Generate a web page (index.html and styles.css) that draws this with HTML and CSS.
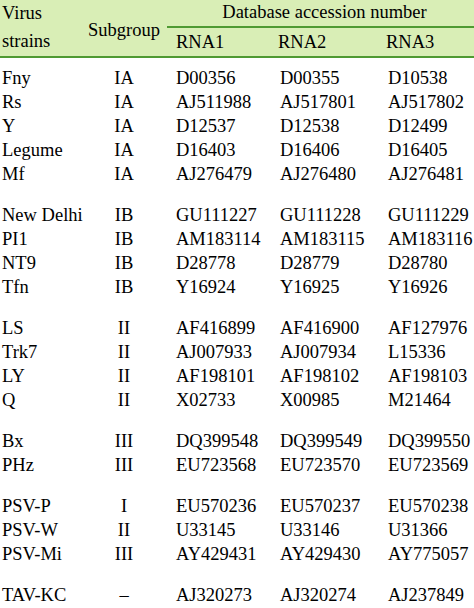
FILE: index.html
```html
<!DOCTYPE html>
<html>
<head>
<meta charset="utf-8">
<link rel="stylesheet" href="styles.css">
</head>
<body>
<div class="table">
  <div class="head">
    <div class="h-strain"><span>Virus</span><span>strains</span></div>
    <div class="h-sub">Subgroup</div>
    <div class="h-db">
      <div class="h-db-title">Database accession number</div>
      <div class="h-rna"><span>RNA1</span><span>RNA2</span><span>RNA3</span></div>
    </div>
  </div>
  <div class="body">
    <div class="group">
      <div class="row"><span>Fny</span><span class="sub">IA</span><span>D00356</span><span>D00355</span><span>D10538</span></div>
      <div class="row"><span>Rs</span><span class="sub">IA</span><span>AJ511988</span><span>AJ517801</span><span>AJ517802</span></div>
      <div class="row"><span>Y</span><span class="sub">IA</span><span>D12537</span><span>D12538</span><span>D12499</span></div>
      <div class="row"><span>Legume</span><span class="sub">IA</span><span>D16403</span><span>D16406</span><span>D16405</span></div>
      <div class="row"><span>Mf</span><span class="sub">IA</span><span>AJ276479</span><span>AJ276480</span><span>AJ276481</span></div>
    </div>
    <div class="group">
      <div class="row"><span>New Delhi</span><span class="sub">IB</span><span>GU111227</span><span>GU111228</span><span>GU111229</span></div>
      <div class="row"><span>PI1</span><span class="sub">IB</span><span>AM183114</span><span>AM183115</span><span>AM183116</span></div>
      <div class="row"><span>NT9</span><span class="sub">IB</span><span>D28778</span><span>D28779</span><span>D28780</span></div>
      <div class="row"><span>Tfn</span><span class="sub">IB</span><span>Y16924</span><span>Y16925</span><span>Y16926</span></div>
    </div>
    <div class="group">
      <div class="row"><span>LS</span><span class="sub">II</span><span>AF416899</span><span>AF416900</span><span>AF127976</span></div>
      <div class="row"><span>Trk7</span><span class="sub">II</span><span>AJ007933</span><span>AJ007934</span><span>L15336</span></div>
      <div class="row"><span>LY</span><span class="sub">II</span><span>AF198101</span><span>AF198102</span><span>AF198103</span></div>
      <div class="row"><span>Q</span><span class="sub">II</span><span>X02733</span><span>X00985</span><span>M21464</span></div>
    </div>
    <div class="group">
      <div class="row"><span>Bx</span><span class="sub">III</span><span>DQ399548</span><span>DQ399549</span><span>DQ399550</span></div>
      <div class="row"><span>PHz</span><span class="sub">III</span><span>EU723568</span><span>EU723570</span><span>EU723569</span></div>
    </div>
    <div class="group">
      <div class="row"><span>PSV-P</span><span class="sub">I</span><span>EU570236</span><span>EU570237</span><span>EU570238</span></div>
      <div class="row"><span>PSV-W</span><span class="sub">II</span><span>U33145</span><span>U33146</span><span>U31366</span></div>
      <div class="row"><span>PSV-Mi</span><span class="sub">III</span><span>AY429431</span><span>AY429430</span><span>AY775057</span></div>
    </div>
    <div class="group">
      <div class="row"><span>TAV-KC</span><span class="sub">–</span><span>AJ320273</span><span>AJ320274</span><span>AJ237849</span></div>
    </div>
  </div>
</div>
</body>
</html>
```
FILE: styles.css
```css
html, body {
  margin: 0;
  padding: 0;
  background: #ffffff;
}
body {
  width: 474px;
  height: 608px;
  overflow: hidden;
  font-family: "Liberation Serif", "Times New Roman", serif;
  font-size: 18.5px;
  color: #000000;
}
.head {
  display: flex;
  height: 56px;
  background: #d9eeb6;
  border-bottom: 2px solid #4f9a32;
}
.h-strain {
  width: 84px;
  padding-left: 2px;
  display: flex;
  flex-direction: column;
}
.h-strain span {
  height: 28px;
  line-height: 26px;
}
.h-sub {
  width: 76px;
  text-align: center;
  line-height: 60px;
  height: 56px;
}
.h-db {
  flex: 1;
  display: flex;
  flex-direction: column;
  padding-left: 5px;
}
.h-db-title {
  height: 26px;
  line-height: 24px;
  border-bottom: 2px solid #4f9a32;
  text-align: center;
  padding-left: 8px;
}
.h-rna {
  display: grid;
  grid-template-columns: 102px 108px 1fr;
  line-height: 28px;
}
.h-rna span {
  padding-left: 9px;
}
.body {
  padding: 8px 0 0 2px;
  display: flex;
  flex-direction: column;
  gap: 17px;
}
.row {
  display: grid;
  grid-template-columns: 84px 76px 104px 108px 1fr;
  height: 24px;
  line-height: 24px;
  white-space: nowrap;
}
.row span:nth-child(n+3) {
  padding-left: 14px;
}
.row .sub {
  text-align: center;
}
```
